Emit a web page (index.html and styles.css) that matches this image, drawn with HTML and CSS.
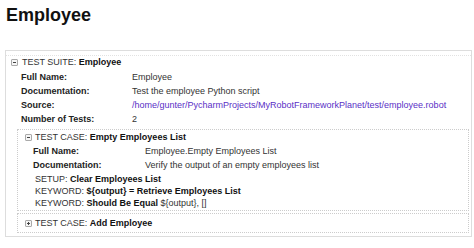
FILE: index.html
```html
<!DOCTYPE html>
<html lang="en">
<head>
  <meta charset="UTF-8" />
  <title>Employee</title>
  <link rel="stylesheet" href="styles.css">
</head>
<body>
  <h1 class="title">Employee</h1>

  <div class="suite-frame">
    <div class="suite">
      <div class="element-header suite-header">
        <span class="toggle open"></span>
        <span>TEST SUITE: <b>Employee</b></span>
      </div>
      <table class="metadata suite-meta">
        <tr><th>Full Name:</th><td>Employee</td></tr>
        <tr><th>Documentation:</th><td>Test the employee Python script</td></tr>
        <tr><th>Source:</th><td><a href="#" class="source-link">/home/gunter/PycharmProjects/MyRobotFrameworkPlanet/test/employee.robot</a></td></tr>
        <tr><th>Number of Tests:</th><td>2</td></tr>
      </table>

      <div class="test">
        <div class="element-header">
          <span class="toggle open"></span>
          <span>TEST CASE: <b>Empty Employees List</b></span>
        </div>
        <table class="metadata test-meta">
          <tr><th>Full Name:</th><td>Employee.Empty Employees List</td></tr>
          <tr><th>Documentation:</th><td>Verify the output of an empty employees list</td></tr>
        </table>
        <div class="keywords">
          <div class="keyword">SETUP: <b>Clear Employees List</b></div>
          <div class="keyword">KEYWORD: <b>${output} = Retrieve Employees List</b></div>
          <div class="keyword">KEYWORD: <b>Should Be Equal</b> ${output}, []</div>
        </div>
      </div>

      <div class="test closed">
        <div class="element-header">
          <span class="toggle"></span>
          <span>TEST CASE: <b>Add Employee</b></span>
        </div>
      </div>
    </div>
  </div>
</body>
</html>
```

FILE: styles.css
```css
* {
  margin: 0;
  padding: 0;
  box-sizing: border-box;
}

body {
  font-family: "Liberation Sans", Arial, sans-serif;
  font-size: 9px;
  color: #333;
  background: #fff;
}

.title {
  font-size: 18px;
  line-height: 22px;
  font-weight: bold;
  color: #111;
  margin: 4px 0 24px 6px;
}

.suite-frame {
  margin: 0 2px 0 5px;
  border: 1px solid #ddd;
  padding: 4px 0 3px;
}

.suite {
  border-top: 1px dotted #e2e2e2;
}

.element-header {
  display: flex;
  align-items: center;
  gap: 4px;
  line-height: 12px;
  color: #333;
}

.element-header b {
  color: #111;
}

.suite-header {
  padding: 0 0 2px 5px;
}

.toggle {
  position: relative;
  width: 7px;
  height: 7px;
  border: 1px solid #aaa;
  border-radius: 1px;
  background: #f6f6f6;
}

.toggle::before {
  content: "";
  position: absolute;
  left: 1px;
  top: 2px;
  width: 3px;
  height: 1px;
  background: #444;
}

.toggle:not(.open)::after {
  content: "";
  position: absolute;
  left: 2px;
  top: 1px;
  width: 1px;
  height: 3px;
  background: #444;
}

.metadata {
  border-collapse: collapse;
}

.metadata th,
.metadata td {
  text-align: left;
  vertical-align: middle;
  height: 14px;
  padding: 0;
  white-space: nowrap;
}

.metadata th {
  font-weight: bold;
  color: #222;
}

.suite-meta {
  margin-left: 15px;
}

.suite-meta th {
  width: 111px;
}

.source-link {
  color: #5a2fc6;
  text-decoration: none;
}

.test {
  margin: 3px 2px 0 11px;
  border: 1px dotted #ccc;
  padding: 1px 0 1px 7px;
}

.test .element-header {
  line-height: 13px;
  gap: 3px;
}

.test-meta {
  margin-left: 8px;
}

.test-meta th {
  width: 112px;
}

.keywords {
  padding: 1px 0 0 10px;
}

.keyword {
  line-height: 12px;
}

.keyword b {
  color: #111;
}

.test.closed {
  margin-top: 2px;
  padding: 2px 0 2px 7px;
}

.test.closed .element-header {
  line-height: 14px;
}
```
